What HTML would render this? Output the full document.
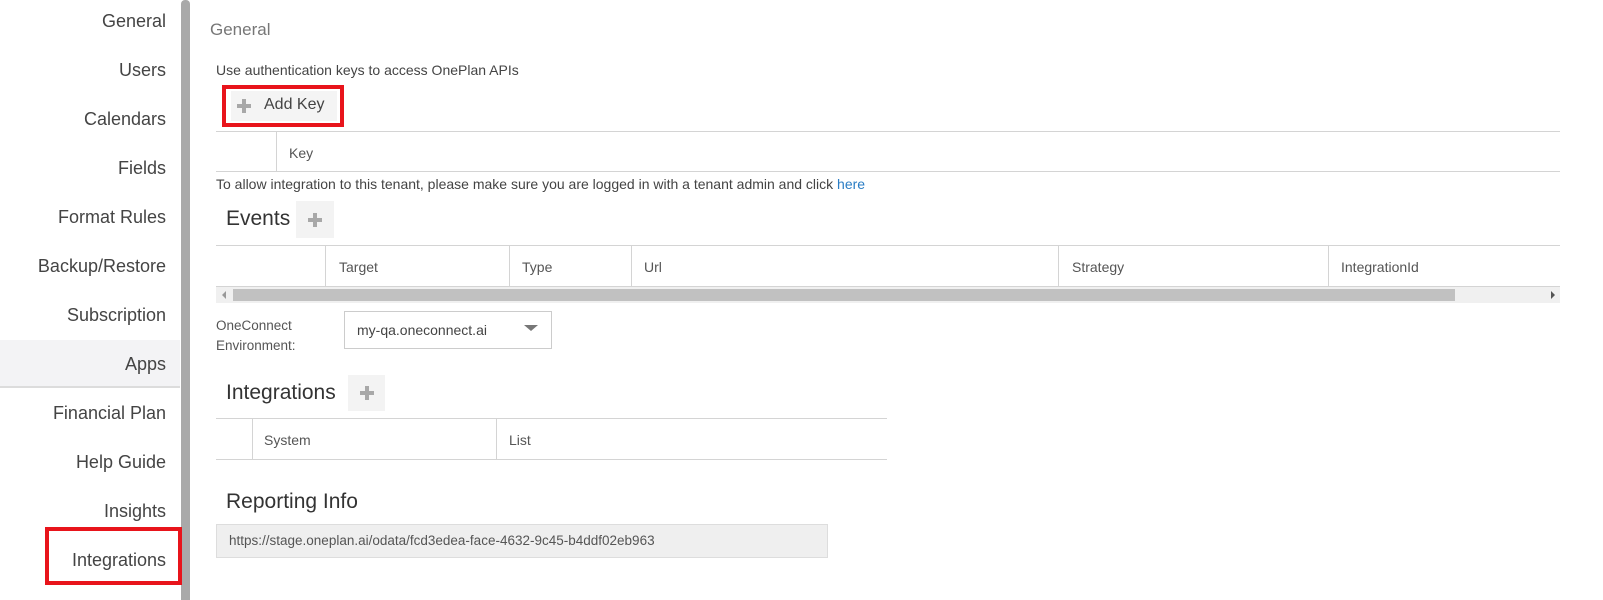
<!DOCTYPE html>
<html><head><meta charset="utf-8"><style>
*{margin:0;padding:0;box-sizing:border-box}
body{width:1603px;height:600px;background:#fff;font-family:"Liberation Sans",sans-serif;position:relative;overflow:hidden;color:#333}
.a{position:absolute;white-space:nowrap}
.nav{position:absolute;right:1437px;font-size:18px;color:#444;text-align:right}
.hl{position:absolute;left:0;top:340px;width:180px;height:48px;background:#f3f3f5;border-bottom:2px solid #dcdcdc}
.line{position:absolute;height:1px;background:#d4d4d4}
.vl{position:absolute;width:1px;background:#d4d4d4}
.th{position:absolute;font-size:14px;color:#555}
.plus{position:absolute;background:#f3f3f3}
.plus:before,.plus:after{content:"";position:absolute;background:#a8a8a8;left:50%;top:50%}
.plus:before{width:14px;height:4px;margin:-2px 0 0 -7px}
.plus:after{width:4px;height:14px;margin:-7px 0 0 -2px}
h2{position:absolute;font-weight:normal;font-size:21px;color:#333}
</style></head><body>
<div class="hl"></div>
<div class="a" style="left:181px;top:0;width:9px;height:600px;background:#a9a9a9;border-radius:4px 4px 0 0"></div>
<div class="nav" style="top:11px">General</div>
<div class="nav" style="top:60px">Users</div>
<div class="nav" style="top:109px">Calendars</div>
<div class="nav" style="top:158px">Fields</div>
<div class="nav" style="top:207px">Format Rules</div>
<div class="nav" style="top:256px">Backup/Restore</div>
<div class="nav" style="top:305px">Subscription</div>
<div class="nav" style="top:354px">Apps</div>
<div class="nav" style="top:403px">Financial Plan</div>
<div class="nav" style="top:452px">Help Guide</div>
<div class="nav" style="top:501px">Insights</div>
<div class="nav" style="top:550px">Integrations</div>
<div class="a" style="left:45px;top:527px;width:137px;height:58px;border:4px solid #e8141b"></div>

<div class="a" style="left:210px;top:20px;font-size:17px;color:#777">General</div>
<div class="a" style="left:216px;top:62px;font-size:14px;color:#444">Use authentication keys to access OnePlan APIs</div>
<div class="a" style="left:231px;top:91px;width:106px;height:30px;background:#f4f4f4"></div>
<div class="plus" style="left:231px;top:91px;width:26px;height:30px;background:none"></div>
<div class="a" style="left:264px;top:96px;font-size:16px;color:#444">Add Key</div>
<div class="a" style="left:222px;top:85px;width:122px;height:42px;border:4px solid #e8141b"></div>

<div class="line" style="left:216px;top:131px;width:1344px"></div>
<div class="line" style="left:216px;top:171px;width:1344px"></div>
<div class="vl" style="left:276px;top:131px;height:40px"></div>
<div class="th" style="left:289px;top:145px">Key</div>
<div class="a" style="left:216px;top:176px;font-size:14px;color:#444">To allow integration to this tenant, please make sure you are logged in with a tenant admin and click <span style="color:#2a7dc4">here</span></div>

<h2 style="left:226px;top:207px">Events</h2>
<div class="plus" style="left:296px;top:201px;width:38px;height:37px"></div>
<div class="line" style="left:216px;top:245px;width:1344px"></div>
<div class="line" style="left:216px;top:286px;width:1344px"></div>
<div class="vl" style="left:325px;top:245px;height:41px"></div>
<div class="vl" style="left:509px;top:245px;height:41px"></div>
<div class="vl" style="left:631px;top:245px;height:41px"></div>
<div class="vl" style="left:1058px;top:245px;height:41px"></div>
<div class="vl" style="left:1328px;top:245px;height:41px"></div>
<div class="th" style="left:339px;top:259px">Target</div>
<div class="th" style="left:522px;top:259px">Type</div>
<div class="th" style="left:644px;top:259px">Url</div>
<div class="th" style="left:1072px;top:259px">Strategy</div>
<div class="th" style="left:1341px;top:259px">IntegrationId</div>
<div class="a" style="left:216px;top:287px;width:1344px;height:16px;background:#f0f0f0"></div>
<div class="a" style="left:233px;top:289px;width:1222px;height:12px;background:#c1c1c1"></div>
<div class="a" style="left:222px;top:291px;border:4px solid transparent;border-right:4px solid #999;border-left:0"></div>
<div class="a" style="left:1551px;top:291px;border:4px solid transparent;border-left:4px solid #555;border-right:0"></div>

<div class="a" style="left:216px;top:316px;font-size:13.5px;color:#555;line-height:20px">OneConnect<br>Environment:</div>
<div class="a" style="left:344px;top:311px;width:208px;height:38px;border:1px solid #ccc"></div>
<div class="a" style="left:357px;top:322px;font-size:14px;color:#444">my-qa.oneconnect.ai</div>
<div class="a" style="left:524px;top:325px;border:6px solid transparent;border-top:6px solid #777;border-bottom:0;border-left-width:7px;border-right-width:7px"></div>

<h2 style="left:226px;top:381px">Integrations</h2>
<div class="plus" style="left:348px;top:375px;width:37px;height:36px"></div>
<div class="line" style="left:216px;top:418px;width:671px"></div>
<div class="line" style="left:216px;top:459px;width:671px"></div>
<div class="vl" style="left:252px;top:418px;height:41px"></div>
<div class="vl" style="left:496px;top:418px;height:41px"></div>
<div class="th" style="left:264px;top:432px">System</div>
<div class="th" style="left:509px;top:432px">List</div>

<h2 style="left:226px;top:490px">Reporting Info</h2>
<div class="a" style="left:216px;top:524px;width:612px;height:34px;background:#efefef;border:1px solid #ddd"></div>
<div class="a" style="left:229px;top:533px;font-size:13.5px;color:#555">https://stage.oneplan.ai/odata/fcd3edea-face-4632-9c45-b4ddf02eb963</div>
</body></html>
